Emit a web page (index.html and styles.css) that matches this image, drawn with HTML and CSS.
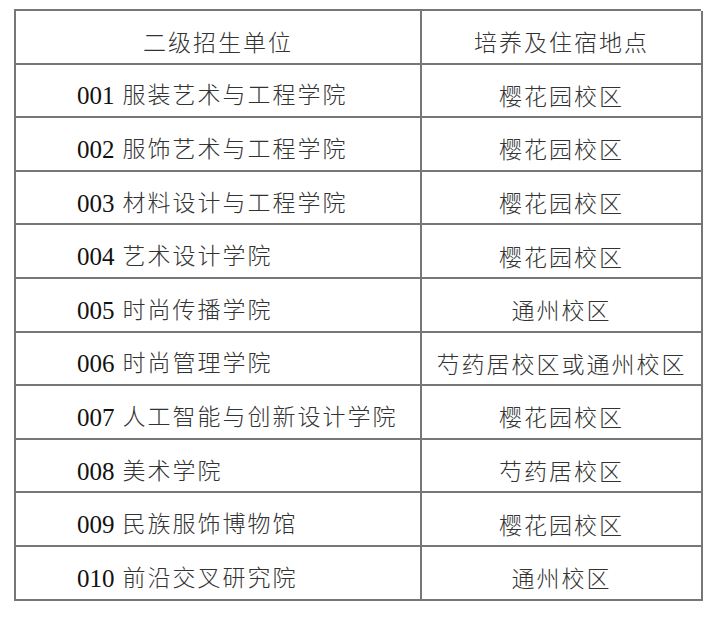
FILE: index.html
```html
<!DOCTYPE html>
<html lang="zh-CN">
<head>
<meta charset="utf-8">
<link rel="stylesheet" href="styles.css">
</head>
<body>
<div class="table">
  <div class="cell head">二级招生单位</div>
  <div class="cell head right">培养及住宿地点</div>

  <div class="cell name"><span class="label"><span class="num">001</span>服装艺术与工程学院</span></div>
  <div class="cell right">樱花园校区</div>

  <div class="cell name"><span class="label"><span class="num">002</span>服饰艺术与工程学院</span></div>
  <div class="cell right">樱花园校区</div>

  <div class="cell name"><span class="label"><span class="num">003</span>材料设计与工程学院</span></div>
  <div class="cell right">樱花园校区</div>

  <div class="cell name"><span class="label"><span class="num">004</span>艺术设计学院</span></div>
  <div class="cell right">樱花园校区</div>

  <div class="cell name"><span class="label"><span class="num">005</span>时尚传播学院</span></div>
  <div class="cell right">通州校区</div>

  <div class="cell name"><span class="label"><span class="num">006</span>时尚管理学院</span></div>
  <div class="cell right">芍药居校区或通州校区</div>

  <div class="cell name"><span class="label"><span class="num">007</span>人工智能与创新设计学院</span></div>
  <div class="cell right">樱花园校区</div>

  <div class="cell name"><span class="label"><span class="num">008</span>美术学院</span></div>
  <div class="cell right">芍药居校区</div>

  <div class="cell name"><span class="label"><span class="num">009</span>民族服饰博物馆</span></div>
  <div class="cell right">樱花园校区</div>

  <div class="cell name"><span class="label"><span class="num">010</span>前沿交叉研究院</span></div>
  <div class="cell right">通州校区</div>
</div>
</body>
</html>
```
FILE: styles.css
```css
html, body {
  margin: 0;
  padding: 0;
  background: #ffffff;
}

body {
  padding: 9px 0 0 14px;
  font-family: "Noto Sans CJK SC", sans-serif;
  color: #333;
}

.table {
  display: grid;
  grid-template-columns: 406px 281px;
  grid-auto-rows: 53.6px;
  width: 687px;
  box-sizing: border-box;
  border-top: 2px solid #777;
  border-left: 2px solid #777;
}

.cell {
  box-sizing: border-box;
  border-right: 2px solid #777;
  border-bottom: 2px solid #777;
  display: flex;
  align-items: center;
  padding-top: 9px;
  font-size: 23px;
  font-weight: 300;
  letter-spacing: 2px;
  white-space: nowrap;
}

.head {
  justify-content: center;
}

.name {
  padding-left: 61px;
}

.label {
  line-height: 34px;
}

.num {
  font-family: "Liberation Serif", "Times New Roman", serif;
  font-weight: 400;
  font-size: 25px;
  letter-spacing: 0;
  color: #111;
  margin-right: 8px;
  vertical-align: -1px;
}

.right {
  justify-content: center;
}
```
